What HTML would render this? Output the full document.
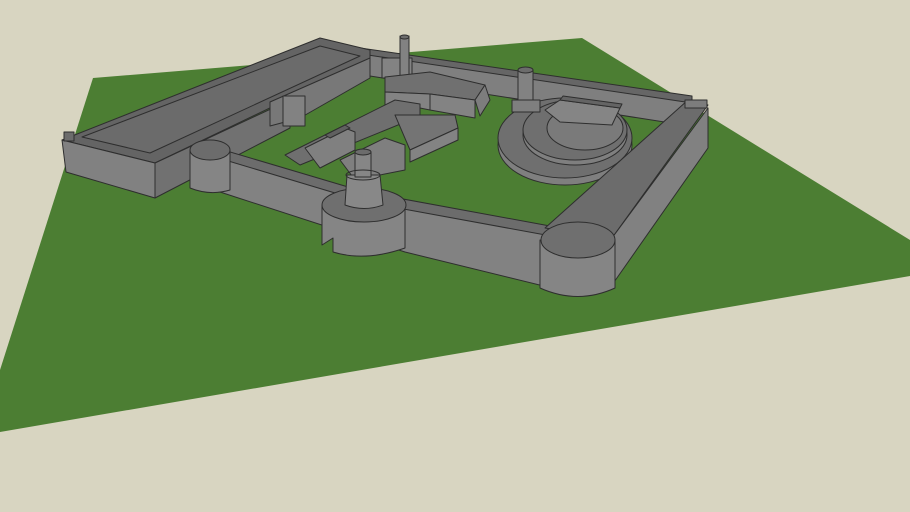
<!DOCTYPE html>
<html><head><meta charset="utf-8"><style>html,body{margin:0;padding:0;background:#d8d5c1;width:910px;height:512px;overflow:hidden}</style></head>
<body>
<svg width="910" height="512" viewBox="0 0 910 512" xmlns="http://www.w3.org/2000/svg" stroke="#2e2e2e" stroke-width="1" stroke-linejoin="round">
<rect width="910" height="512" fill="#d8d5c1" stroke="none"/>
<polygon points="93,78 582,38 910,240 910,276 0,432 0,370" fill="#4c7e33" stroke="none"/>
<!-- back wall -->
<polygon points="370,52 690,100 690,126 370,76" fill="#7f7f7f"/>
<polygon points="360,48 692,96 692,103 368,55" fill="#666"/>
<rect x="382" y="58" width="30" height="20" fill="#838383"/>
<rect x="400" y="36" width="9" height="56" fill="#828282"/>
<ellipse cx="404.5" cy="37" rx="4.5" ry="2" fill="#6c6c6c"/>
<!-- interior buildings -->
<polygon points="385,77 430,72 485,85 475,100 430,94 385,92" fill="#707070"/>
<polygon points="430,94 475,100 475,118 430,110" fill="#838383"/>
<polygon points="385,92 430,94 430,110 405,105 385,110" fill="#838383"/>
<polygon points="475,100 485,85 490,100 480,116" fill="#7d7d7d"/>
<polygon points="285,155 395,100 420,104 420,116 300,165" fill="#6f6f6f"/>
<polygon points="395,115 455,115 458,128 410,150" fill="#747474"/>
<polygon points="410,150 458,128 458,140 410,162" fill="#838383"/>
<polygon points="305,148 345,128 355,132 355,150 320,168" fill="#808080"/>
<polygon points="325,135 345,125 350,128 330,138" fill="#606060"/>
<polygon points="340,160 385,138 405,145 405,170 355,180" fill="#7f7f7f"/>
<rect x="288" y="98" width="14" height="28" fill="#858585"/>
<!-- amphitheater -->
<ellipse cx="565" cy="145" rx="67" ry="40" fill="#7f7f7f"/>
<ellipse cx="565" cy="138" rx="67" ry="40" fill="#6f6f6f"/>
<ellipse cx="575" cy="135" rx="52" ry="30" fill="#7f7f7f"/>
<ellipse cx="575" cy="130" rx="52" ry="30" fill="#6f6f6f"/>
<ellipse cx="585" cy="128" rx="38" ry="22" fill="#7a7a7a"/>
<polygon points="545,110 560,100 620,108 612,125 560,122" fill="#858585"/>
<polygon points="560,100 620,108 622,104 563,96" fill="#646464"/>
<!-- tower 525 -->
<rect x="518" y="70" width="15" height="42" fill="#828282"/>
<ellipse cx="525.5" cy="70" rx="7.5" ry="3" fill="#6c6c6c"/>
<polygon points="512,112 540,112 540,100 512,100" fill="#7f7f7f"/>
<!-- long building -->
<polygon points="62,140 320,38 370,50 370,60 155,163" fill="#646464"/>
<polygon points="82,137 320,46 360,56 150,153" fill="#6b6b6b"/>
<polygon points="62,140 155,163 155,198 66,172" fill="#818181"/>
<polygon points="155,163 290,100 290,128 155,198" fill="#717171"/>
<polygon points="270,102 370,58 370,78 300,118 270,126" fill="#787878"/>
<rect x="283" y="96" width="22" height="30" fill="#828282"/>
<rect x="64" y="132" width="10" height="9" fill="#6c6c6c"/>
<!-- front wall -->
<polygon points="215,157 560,238 560,290 405,252 220,192" fill="#828282"/>
<polygon points="210,146 365,192 550,226 562,238 365,202 215,157" fill="#6c6c6c"/>
<!-- left round tower -->
<path d="M190 150 V188 Q210 196 230 190 V150" fill="#858585"/>
<ellipse cx="210" cy="150" rx="20" ry="10" fill="#6c6c6c"/>
<!-- center tower -->
<path d="M322 205 V245 L333 238 V252 Q365 262 405 248 V205 Z" fill="#858585"/>
<ellipse cx="364" cy="205" rx="42" ry="17" fill="#6f6f6f"/>
<path d="M347 175 L345 205 Q364 212 383 205 L380 175 Z" fill="#888"/>
<rect x="355" y="152" width="16" height="25" fill="#868686"/>
<ellipse cx="363" cy="152" rx="8" ry="3" fill="#6c6c6c"/>
<ellipse cx="363" cy="175" rx="17" ry="5" fill="none"/>
<!-- right wall -->
<polygon points="545,228 688,100 708,105 612,238" fill="#6c6c6c"/>
<polygon points="612,238 708,108 708,148 612,285" fill="#818181"/>
<rect x="685" y="100" width="22" height="8" fill="#7d7d7d"/>
<!-- corner tower -->
<path d="M540 240 V288 Q578 305 615 288 V240 Z" fill="#858585"/>
<ellipse cx="578" cy="240" rx="37" ry="18" fill="#6f6f6f"/>
</svg>
</body></html>
